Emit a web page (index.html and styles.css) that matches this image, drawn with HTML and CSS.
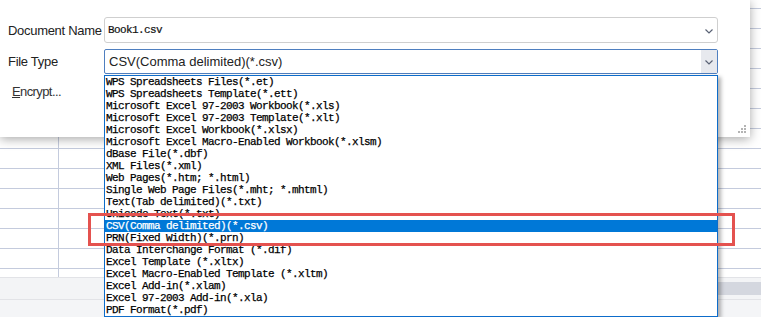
FILE: index.html
```html
<!DOCTYPE html>
<html lang="en">
<head>
    <meta charset="UTF-8">
    <meta name="viewport" content="width=device-width, initial-scale=1.0">
    <title>Save As</title>
    <link rel="stylesheet" href="styles.css">
</head>
<body>
    <div class="app">
        <div class="sheet"></div>
        <div class="tabbar"><div class="hscroll"></div></div>
        <div class="statusbar"></div>

        <div class="dialog">
            <div class="form">
                <label class="label">Document Name</label>
                <div class="field">
                    <span class="mono">Book1.csv</span>
                    <svg class="chevron" width="8" height="5" viewBox="0 0 8 5"><polyline points="0.5,0.5 4,4 7.5,0.5" /></svg>
                </div>
                <label class="label">File Type</label>
                <div class="field select">
                    <span>CSV(Comma delimited)(*.csv)</span>
                    <span class="drop-btn">
                        <svg class="chevron" width="8" height="5" viewBox="0 0 8 5"><polyline points="0.5,0.5 4,4 7.5,0.5" /></svg>
                    </span>
                </div>
            </div>
            <div class="encrypt"><u>E</u>ncrypt...</div>
            <svg class="grip" width="10" height="9" viewBox="0 0 10 9">
                <rect x="7" y="0" width="2" height="2" />
                <rect x="4" y="3" width="2" height="2" />
                <rect x="7" y="3" width="2" height="2" />
                <rect x="1" y="6" width="2" height="2" />
                <rect x="4" y="6" width="2" height="2" />
                <rect x="7" y="6" width="2" height="2" />
            </svg>
        </div>

        <ul class="type-list">
            <li>WPS Spreadsheets Files(*.et)</li>
            <li>WPS Spreadsheets Template(*.ett)</li>
            <li>Microsoft Excel 97-2003 Workbook(*.xls)</li>
            <li>Microsoft Excel 97-2003 Template(*.xlt)</li>
            <li>Microsoft Excel Workbook(*.xlsx)</li>
            <li>Microsoft Excel Macro-Enabled Workbook(*.xlsm)</li>
            <li>dBase File(*.dbf)</li>
            <li>XML Files(*.xml)</li>
            <li>Web Pages(*.htm; *.html)</li>
            <li>Single Web Page Files(*.mht; *.mhtml)</li>
            <li>Text(Tab delimited)(*.txt)</li>
            <li>Unicode Text(*.txt)</li>
            <li class="selected">CSV(Comma delimited)(*.csv)</li>
            <li>PRN(Fixed Width)(*.prn)</li>
            <li>Data Interchange Format (*.dif)</li>
            <li>Excel Template (*.xltx)</li>
            <li>Excel Macro-Enabled Template (*.xltm)</li>
            <li>Excel Add-in(*.xlam)</li>
            <li>Excel 97-2003 Add-in(*.xla)</li>
            <li>PDF Format(*.pdf)</li>
        </ul>

        <div class="highlight"></div>
    </div>
</body>
</html>
```

FILE: styles.css
```css
body {
    margin: 0;
    font-family: "Liberation Sans", Arial, sans-serif;
    background-color: #ffffff;
}

.app {
    position: relative;
    width: 761px;
    height: 317px;
    overflow: hidden;
}

/* spreadsheet behind the dialog */
.sheet {
    height: 277px;
    background-color: #ffffff;
    background-image:
        linear-gradient(to right, transparent 58px, #c4cbdd 58px, #c4cbdd 59px, transparent 59px),
        linear-gradient(to bottom, transparent 8px, #c4cbdd 8px, #c4cbdd 9px, transparent 9px);
    background-size: 100% 100%, 100% 20px;
    background-repeat: no-repeat, repeat-y;
}

.tabbar {
    display: flex;
    height: 21px;
    background-color: #f3f4f6;
    border-top: 1px solid #e2e3e7;
    border-bottom: 1px solid #e2e3e7;
}

.hscroll {
    margin: 4px 0 0 600px;
    flex: 1;
    height: 13px;
    background-color: #d4d7df;
}

.statusbar {
    height: 30px;
    background-color: #f4f5f7;
}

/* save dialog */
.dialog {
    position: absolute;
    left: 0;
    top: 0;
    width: 750px;
    height: 137px;
    background-color: #ffffff;
    box-shadow: 0 2px 10px rgba(0, 0, 0, 0.35);
}

.form {
    display: grid;
    grid-template-columns: 96px 614px;
    grid-template-rows: 26px 25px;
    row-gap: 6px;
    padding: 17px 0 0 8px;
}

.label {
    align-self: center;
    font-size: 13px;
    letter-spacing: -0.3px;
    color: #222222;
}

.field {
    display: flex;
    align-items: center;
    padding-left: 3px;
    border: 1px solid #cfcfcf;
    border-radius: 3px;
    font-size: 13px;
    color: #222222;
}

.field .chevron {
    margin: 2px 4px 0 auto;
}

.select {
    padding-left: 4px;
    border-color: #4f7fc0;
    border-radius: 2px;
}

.drop-btn {
    display: flex;
    align-items: center;
    justify-content: center;
    align-self: stretch;
    width: 16px;
    margin-left: auto;
    background-color: #e7e9ee;
}

.select .chevron {
    margin: 2px 0 0 0;
}

.chevron polyline {
    fill: none;
    stroke: #5a6275;
    stroke-width: 1.2;
}

.mono {
    font-family: "Liberation Mono", "Courier New", monospace;
    font-size: 11px;
    letter-spacing: -0.6px;
    color: #111111;
    -webkit-text-stroke: 0.2px #111111;
}

.encrypt {
    margin: 10px 0 0 12px;
    font-size: 13px;
    letter-spacing: -0.6px;
    color: #333333;
}

.grip {
    position: absolute;
    right: 3px;
    bottom: 3px;
    fill: #b4b4b4;
}

/* open file type list */
.type-list {
    position: absolute;
    left: 104px;
    top: 75px;
    width: 612px;
    margin: 0;
    padding: 0;
    list-style: none;
    background-color: #ffffff;
    border: 1px solid #0d6cca;
    box-shadow: 3px 2px 4px rgba(0, 0, 0, 0.3);
    font-family: "Liberation Mono", "Courier New", monospace;
    font-size: 11px;
    letter-spacing: -0.6px;
    color: #000000;
    -webkit-text-stroke: 0.25px #000000;
}

.type-list li {
    height: 12px;
    line-height: 12px;
    padding-left: 1px;
    white-space: nowrap;
}

.type-list .selected {
    background-color: #0078d7;
    color: #ffffff;
    -webkit-text-stroke: 0.25px #ffffff;
}

.highlight {
    position: absolute;
    left: 88px;
    top: 213px;
    width: 647px;
    height: 33px;
    box-sizing: border-box;
    border: 3px solid #e4524f;
}
```
